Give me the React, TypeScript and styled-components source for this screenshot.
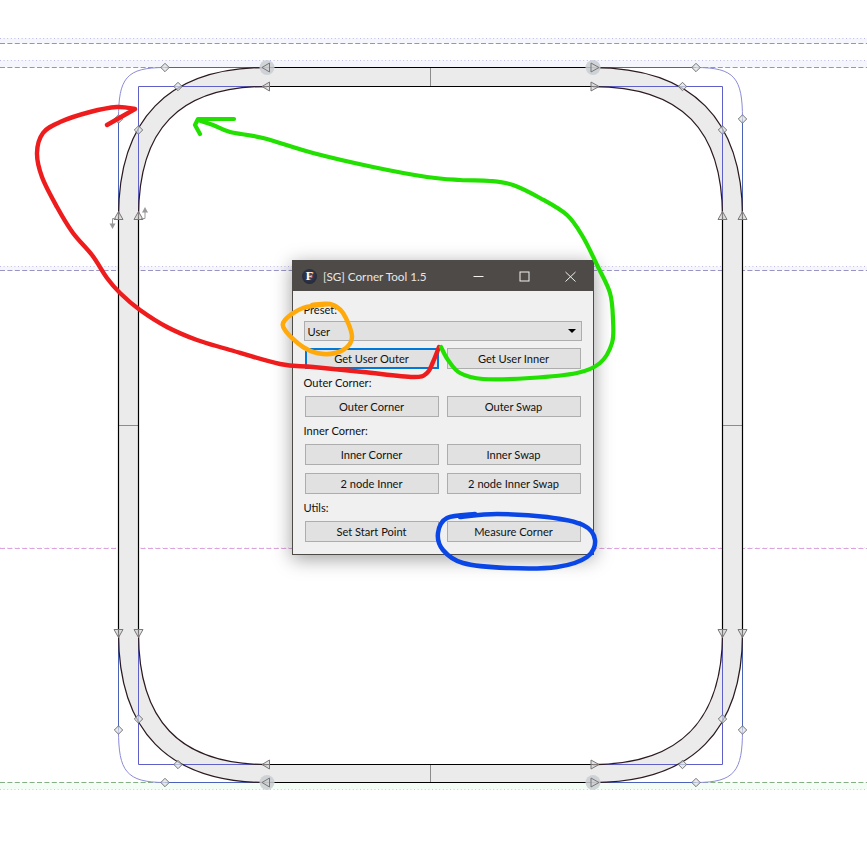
import React from "react";
import styled, { createGlobalStyle } from "styled-components";

const GlobalStyle = createGlobalStyle`
  html, body {
    margin: 0;
    padding: 0;
    background: #fff;
    overflow: hidden;
  }
`;

const Canvas = styled.div`
  position: relative;
  width: 867px;
  height: 844px;
  background: #fff;
  font-family: Lato, "Open Sans", "Liberation Sans", sans-serif;
`;

const Drawing = styled.svg`
  display: block;
`;

const InkLayer = styled.svg`
  position: absolute;
  left: 0;
  top: 0;
  pointer-events: none;
`;

const Ink = styled.path<{ $color: string; $width?: number }>`
  fill: none;
  stroke: ${(p) => p.$color};
  stroke-width: ${(p) => p.$width ?? 4}px;
  stroke-linecap: round;
  stroke-linejoin: round;
`;

const GuideDash = styled.line<{ $color: string }>`
  stroke: ${(p) => p.$color};
  stroke-width: 1;
  stroke-dasharray: 5 2.4;
`;

const GuideDot = styled.line<{ $color: string }>`
  stroke: ${(p) => p.$color};
  stroke-width: 1;
  stroke-dasharray: 1 2.6;
`;

const Band = styled.rect<{ $color: string }>`
  fill: ${(p) => p.$color};
`;

const Shape = styled.path`
  fill: #ebebeb;
  fill-rule: evenodd;
  stroke: none;
`;

const Straight = styled.path`
  fill: none;
  stroke: #000;
  stroke-width: 1.2;
`;

const Curve = styled.path`
  fill: none;
  stroke: #2b1a20;
  stroke-width: 1.25;
`;

const Handle = styled.path<{ $color: string }>`
  fill: none;
  stroke: ${(p) => p.$color};
  stroke-width: 1;
`;

const Tick = styled.line`
  stroke: #8c8c8c;
  stroke-width: 1;
`;

const NodeHalo = styled.circle`
  fill: #c9ced2;
  opacity: 0.85;
`;

const NodeMark = styled.polygon`
  fill: rgba(205, 205, 205, 0.55);
  stroke: #777;
  stroke-width: 1;
`;

const HandleMark = styled.polygon`
  fill: rgba(220, 225, 230, 0.7);
  stroke: #666;
  stroke-width: 0.9;
`;

const ArrowStem = styled.path`
  fill: none;
  stroke: #9a9a9a;
  stroke-width: 1;
`;

const ArrowHead = styled.path`
  fill: #9a9a9a;
`;

const Window = styled.div`
  position: absolute;
  left: 292px;
  top: 260px;
  width: 302px;
  height: 295px;
  box-sizing: border-box;
  display: flex;
  flex-direction: column;
  border: 1px solid #4d4a47;
  background: #f0f0f0;
  box-shadow: 0 4px 18px rgba(0, 0, 0, 0.38);
`;

const TitleBar = styled.div`
  height: 30px;
  flex: none;
  display: flex;
  align-items: center;
  background: #4d4a47;
  color: #e6e6e6;
  font-size: 11.7px;
`;

const Logo = styled.span`
  width: 15px;
  height: 15px;
  flex: none;
  margin: 0 6px 0 9px;
  border-radius: 50%;
  background: radial-gradient(circle at 50% 45%, #3a4258, #1c2030);
  color: #fff;
  font: bold 12px/15px "Liberation Serif", serif;
  text-align: center;
  text-shadow: 1px 0 0 #c8402a;
`;

const TitleText = styled.span`
  flex: 1;
  white-space: nowrap;
`;

const WindowButton = styled.div`
  width: 46px;
  height: 30px;
  display: flex;
  align-items: center;
  justify-content: center;

  svg {
    display: block;
    stroke: #f2f2f2;
    stroke-width: 1;
    fill: none;
  }
`;

const Body = styled.div`
  display: flex;
  flex-direction: column;
  padding: 12px 11px 0 10.5px;
  color: #111;
  font-size: 11.1px;
`;

const SectionLabel = styled.div<{ $top: number; $bottom: number }>`
  height: 14px;
  line-height: 14px;
  margin: ${(p) => p.$top}px 0 ${(p) => p.$bottom}px;
`;

const Combo = styled.div`
  height: 20px;
  box-sizing: border-box;
  display: flex;
  align-items: center;
  justify-content: space-between;
  padding: 0 5px 0 3px;
  background: #e1e1e1;
  border: 1px solid #adadad;
`;

const ComboArrow = styled.span`
  width: 0;
  height: 0;
  border-left: 4px solid transparent;
  border-right: 4px solid transparent;
  border-top: 4px solid #000;
`;

const ButtonRow = styled.div<{ $top?: number; $bottom?: number }>`
  display: grid;
  grid-template-columns: 134px 134px;
  gap: 8px;
  padding: 0 1px;
  margin-top: ${(p) => p.$top ?? 0}px;
  margin-bottom: ${(p) => p.$bottom ?? 0}px;
`;

const ToolButton = styled.button<{ $focused?: boolean }>`
  height: 21px;
  box-sizing: border-box;
  padding: 0;
  background: #e1e1e1;
  border: ${(p) => (p.$focused ? "2px solid #0078d7" : "1px solid #adadad")};
  border-radius: 0;
  color: #111;
  font: inherit;
`;

const Minimize = () => (
  <svg width="11" height="11" viewBox="0 0 11 11">
    <path d="M0.5 5.5h10" />
  </svg>
);

const Maximize = () => (
  <svg width="11" height="11" viewBox="0 0 11 11">
    <rect x="1" y="1" width="9" height="9" />
  </svg>
);

const Close = () => (
  <svg width="11" height="11" viewBox="0 0 11 11">
    <path d="M0.5 1l10 9.5M10.5 1l-10 9.5" />
  </svg>
);

const guides = [
  { dot: 38.5, dash: 43.5, dashColor: "#9a94b4", dotColor: "#b9b9ec", band: "#f5f6fc" },
  { dot: 60.5, dash: 67.5, dashColor: "#9a94b4", dotColor: "#b9b9ec", band: "#f5f6fc" },
  { dot: 266.5, dash: 270.5, dashColor: "#9a94c4", dotColor: "#c0bce8", band: "#f5f6fc" },
  { dot: 547.5, dash: 548.5, dashColor: "#dca4dc", dotColor: "#f4e4f4", band: "#fff" },
  { dot: 789.5, dash: 782.5, dashColor: "#84b084", dotColor: "#b8dcb8", band: "#f4fcf6" },
];

const outerCurves =
  "M118.5 217C118.5 120 167 67.5 267 67.5M593 67.5C693 67.5 742.5 120 742.5 217M742.5 633C742.5 730 693 782.5 593 782.5M267 782.5C167 782.5 118.5 730 118.5 633";
const innerCurves =
  "M138.5 217C138.5 130 178 86.5 267 86.5M593 86.5C682 86.5 722.5 130 722.5 217M722.5 633C722.5 719 682 764.5 593 764.5M267 764.5C178 764.5 138.5 719 138.5 633";
const straights =
  "M267 67.5H593M267 86.5H593M267 764.5H593M267 782.5H593M118.5 217V633M138.5 217V633M722.5 217V633M742.5 217V633";
const shapeFill =
  "M118.5 217C118.5 120 167 67.5 267 67.5H593C693 67.5 742.5 120 742.5 217V633C742.5 730 693 782.5 593 782.5H267C167 782.5 118.5 730 118.5 633Z" +
  "M138.5 217V633C138.5 719 178 764.5 267 764.5H593C682 764.5 722.5 719 722.5 633V217C722.5 130 682 86.5 593 86.5H267C178 86.5 138.5 130 138.5 217Z";
const innerHandles =
  "M138.5 217V86.5H267M593 86.5H722.5V217M722.5 633V764.5H593M267 764.5H138.5V633";
const outerLines =
  "M118.5 217V119M165 67.5H267M593 67.5H696M742.5 119V217M742.5 633V730M696 782.5H593M267 782.5H165M118.5 730V633";
const outerRounds =
  "M118.5 119C118.5 78 126 67.5 165 67.5M696 67.5C735 67.5 742.5 78 742.5 119M742.5 730C742.5 771 735 782.5 696 782.5M165 782.5C126 782.5 118.5 771 118.5 730";

const leftNodes = [
  [267, 67.5],
  [267, 86.5],
  [267, 764.5],
  [267, 782.5],
];
const rightNodes = [
  [593, 67.5],
  [593, 86.5],
  [593, 764.5],
  [593, 782.5],
];
const upNodes = [
  [118.5, 216],
  [138.5, 216],
  [722.5, 216],
  [742.5, 216],
];
const downNodes = [
  [118.5, 633],
  [138.5, 633],
  [722.5, 633],
  [742.5, 633],
];
const halos = [
  [267, 67.5],
  [593, 67.5],
  [267, 782.5],
  [593, 782.5],
];
const diamonds = [
  [165, 67.5],
  [178, 86.5],
  [118.5, 119],
  [138.5, 130],
  [696, 67.5],
  [682.5, 86.5],
  [742.5, 119],
  [722.5, 130],
  [118.5, 730],
  [138.5, 719],
  [165, 782.5],
  [178, 764.5],
  [742.5, 730],
  [722.5, 719],
  [696, 782.5],
  [682.5, 764.5],
];

// hand-drawn strokes, traced as points and smoothed
const redStroke = [
  [135, 109], [117, 107], [90, 112], [60, 122], [43, 133], [37, 153], [42, 177],
  [57, 207], [73, 233], [92, 255], [107, 278], [120, 293], [140, 310], [167, 327],
  [197, 340], [227, 349], [280, 364], [313, 367], [363, 372], [413, 377], [427, 373],
  [433, 362], [439, 347],
];
const greenStroke = [
  [198, 120], [213, 125], [230, 132], [263, 138], [313, 153], [373, 167], [427, 177],
  [460, 180], [490, 181], [513, 185], [540, 198], [567, 215], [583, 237], [597, 265],
  [610, 293], [613, 320], [612, 343], [600, 363], [577, 373], [530, 378], [483, 379],
  [460, 373], [448, 360], [441, 347],
];
const orangeStroke = [
  [330, 304], [303, 308], [285, 320], [285, 330], [303, 347], [323, 354], [343, 350],
  [352, 337], [343, 313], [330, 304], [312, 305],
];
const blueStroke = [
  [475, 514], [447, 518], [438, 533], [443, 550], [463, 563], [507, 568], [557, 567],
  [587, 557], [595, 540], [583, 525], [547, 517], [497, 514], [460, 517],
];

const smooth = (p: number[][]) => {
  let d = `M${p[0][0]} ${p[0][1]}`;
  for (let i = 0; i < p.length - 1; i++) {
    const a = p[Math.max(i - 1, 0)];
    const b = p[i];
    const c = p[i + 1];
    const e = p[Math.min(i + 2, p.length - 1)];
    d += `C${b[0] + (c[0] - a[0]) / 6} ${b[1] + (c[1] - a[1]) / 6} ${c[0] - (e[0] - b[0]) / 6} ${c[1] - (e[1] - b[1]) / 6} ${c[0]} ${c[1]}`;
  }
  return d;
};

const pts = (list: number[][]) => list.map((p) => p.join(",")).join(" ");

const CornerDrawing = () => (
  <Drawing width="867" height="844" viewBox="0 0 867 844">
    {guides.map((g) => (
      <g key={g.dash}>
        <Band
          $color={g.band}
          x="0"
          y={Math.min(g.dot, g.dash)}
          width="867"
          height={Math.abs(g.dash - g.dot)}
        />
        <GuideDot $color={g.dotColor} x1="0" x2="867" y1={g.dot} y2={g.dot} />
        <GuideDash $color={g.dashColor} x1="0" x2="867" y1={g.dash} y2={g.dash} />
      </g>
    ))}
    <Shape d={shapeFill} />
    <Tick x1="430.5" x2="430.5" y1="67.5" y2="86.5" />
    <Tick x1="430.5" x2="430.5" y1="764.5" y2="782.5" />
    <Tick x1="118.5" x2="138.5" y1="425.5" y2="425.5" />
    <Tick x1="722.5" x2="742.5" y1="425.5" y2="425.5" />
    <Handle $color="#5f5fc8" d={innerHandles} />
    <Handle $color="#4a62b8" d={outerLines} />
    <Handle $color="#8c8cd8" d={outerRounds} />
    <Straight d={straights} />
    <Curve d={outerCurves} />
    <Curve d={innerCurves} />
    {halos.map(([x, y]) => (
      <NodeHalo key={`${x}-${y}`} cx={x} cy={y} r="7.5" />
    ))}
    {leftNodes.map(([x, y]) => (
      <NodeMark key={y} points={pts([[x - 5, y], [x + 2.5, y - 4.5], [x + 2.5, y + 4.5]])} />
    ))}
    {rightNodes.map(([x, y]) => (
      <NodeMark key={y} points={pts([[x + 6, y], [x - 2, y - 4.5], [x - 2, y + 4.5]])} />
    ))}
    {upNodes.map(([x, y]) => (
      <NodeMark key={x} points={pts([[x, y - 4.5], [x - 4.5, y + 3.5], [x + 4.5, y + 3.5]])} />
    ))}
    {downNodes.map(([x, y]) => (
      <NodeMark key={x} points={pts([[x, y + 4.5], [x - 4.5, y - 3.5], [x + 4.5, y - 3.5]])} />
    ))}
    {diamonds.map(([x, y]) => (
      <HandleMark
        key={`${x}-${y}`}
        points={pts([[x, y - 4.2], [x + 4.2, y], [x, y + 4.2], [x - 4.2, y]])}
      />
    ))}
    <ArrowStem d="M116 218.5H112.5V224" />
    <ArrowHead d="M109.5 223.5H115.5L112.5 229Z" />
    <ArrowStem d="M141 218.5H145V212" />
    <ArrowHead d="M142 212.5H148L145 207Z" />
  </Drawing>
);

const Annotations = () => (
  <InkLayer width="867" height="844" viewBox="0 0 867 844">
    <Ink $color="#ee1c1c" $width={4.4} d={`M107 125L135 109${smooth(redStroke)}`} />
    <Ink $color="#22e000" $width={4.2} d={`M234 119H198L195 125L200 134${smooth(greenStroke)}`} />
    <Ink $color="#ffa90a" $width={4.5} d={smooth(orangeStroke)} />
    <Ink $color="#0a46e6" $width={4.5} d={smooth(blueStroke)} />
  </InkLayer>
);

export default function App() {
  return (
    <Canvas>
      <GlobalStyle />
      <CornerDrawing />
      <Window>
        <TitleBar>
          <Logo>F</Logo>
          <TitleText>[SG] Corner Tool 1.5</TitleText>
          <WindowButton>
            <Minimize />
          </WindowButton>
          <WindowButton>
            <Maximize />
          </WindowButton>
          <WindowButton>
            <Close />
          </WindowButton>
        </TitleBar>
        <Body>
          <SectionLabel $top={0} $bottom={4}>
            Preset:
          </SectionLabel>
          <Combo>
            User
            <ComboArrow />
          </Combo>
          <ButtonRow $top={7}>
            <ToolButton $focused>Get User Outer</ToolButton>
            <ToolButton>Get User Inner</ToolButton>
          </ButtonRow>
          <SectionLabel $top={7} $bottom={6}>
            Outer Corner:
          </SectionLabel>
          <ButtonRow>
            <ToolButton>Outer Corner</ToolButton>
            <ToolButton>Outer Swap</ToolButton>
          </ButtonRow>
          <SectionLabel $top={7} $bottom={6}>
            Inner Corner:
          </SectionLabel>
          <ButtonRow $bottom={8}>
            <ToolButton>Inner Corner</ToolButton>
            <ToolButton>Inner Swap</ToolButton>
          </ButtonRow>
          <ButtonRow>
            <ToolButton>2 node Inner</ToolButton>
            <ToolButton>2 node Inner Swap</ToolButton>
          </ButtonRow>
          <SectionLabel $top={7} $bottom={6}>
            Utils:
          </SectionLabel>
          <ButtonRow>
            <ToolButton>Set Start Point</ToolButton>
            <ToolButton>Measure Corner</ToolButton>
          </ButtonRow>
        </Body>
      </Window>
      <Annotations />
    </Canvas>
  );
}
